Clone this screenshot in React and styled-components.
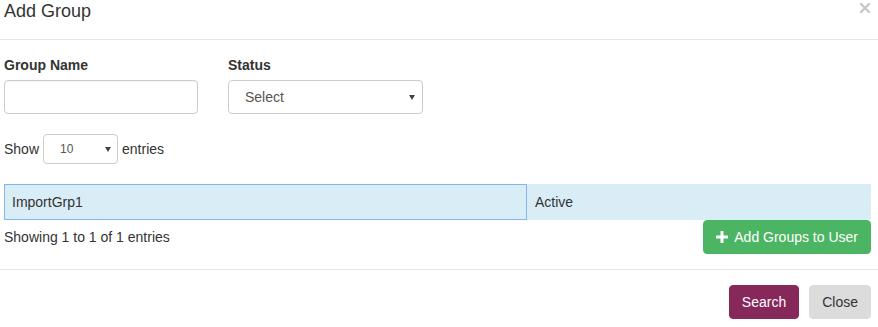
import React from "react";
import styled, { createGlobalStyle } from "styled-components";

const Global = createGlobalStyle`
  html, body { margin: 0; padding: 0; background: #fff; }
  body {
    font-family: "Liberation Sans", Arial, sans-serif;
    font-size: 14px;
    line-height: 20px;
    color: #333;
  }
  * { box-sizing: border-box; }
`;

const Modal = styled.div`
  width: 878px;
  background: #fff;
`;

const Header = styled.div`
  display: flex;
  justify-content: space-between;
  align-items: flex-start;
  height: 40px;
  padding: 1px 8px 0 4px;
  border-bottom: 1px solid #e5e5e5;
`;

const Title = styled.h4`
  margin: 0;
  font-size: 18px;
  line-height: 20px;
  font-weight: 400;
  color: #333;
`;

const CloseButton = styled.button`
  display: flex;
  border: 0;
  padding: 0;
  margin-top: 2px;
  background: transparent;
  cursor: pointer;
`;

const Body = styled.div`
  padding: 15px 7px 15px 4px;
`;

const FormRow = styled.div`
  display: grid;
  grid-template-columns: 194px 195px;
  column-gap: 30px;
  margin-bottom: 20px;
`;

const Field = styled.div`
  display: flex;
  flex-direction: column;
`;

const Label = styled.label`
  font-weight: 700;
  line-height: 20px;
  margin-bottom: 5px;
`;

const TextInput = styled.input`
  height: 34px;
  width: 100%;
  border: 1px solid #ccc;
  border-radius: 4px;
  padding: 6px 12px;
  font: inherit;
  color: #555;
  outline: none;
  box-shadow: inset 0 1px 1px rgba(0, 0, 0, 0.04);
`;

const SelectBox = styled.div`
  position: relative;
  display: flex;
  align-items: center;
  height: ${(p) => (p.$small ? "30px" : "34px")};
  width: ${(p) => (p.$small ? "75px" : "100%")};
  border: 1px solid #ccc;
  border-radius: 4px;
  padding-left: 16px;
  font-size: ${(p) => (p.$small ? "12px" : "14px")};
  color: #555;
  background: #fff;
`;

const Caret = styled.span`
  position: absolute;
  right: ${(p) => (p.$small ? "6px" : "7px")};
  top: 50%;
  margin-top: -2px;
  width: 0;
  height: 0;
  border-left: 3.5px solid transparent;
  border-right: 3.5px solid transparent;
  border-top: 5px solid #444;
`;

const ShowRow = styled.div`
  display: flex;
  align-items: center;
  gap: 4px;
  margin-bottom: 20px;
`;

const Table = styled.div`
  display: grid;
  grid-template-columns: 523px 1fr;
  background: #d9edf7;
`;

const Cell = styled.div`
  height: 36px;
  padding: 7px 7px;
  line-height: 20px;
  border: 1px solid ${(p) => (p.$focus ? "#86b5ec" : "transparent")};
`;

const InfoRow = styled.div`
  display: flex;
  justify-content: space-between;
  align-items: center;
`;

const Button = styled.button`
  display: inline-flex;
  align-items: center;
  gap: 6px;
  height: 34px;
  padding: 6px 12px;
  border: 1px solid ${(p) => p.$bg};
  border-radius: 4px;
  font-family: inherit;
  font-size: 14px;
  line-height: 20px;
  cursor: pointer;
  background: ${(p) => p.$bg};
  color: ${(p) => p.$fg};
`;

const Footer = styled.div`
  display: flex;
  justify-content: flex-end;
  gap: 10px;
  padding: 15px 7px 15px 4px;
  border-top: 1px solid #e5e5e5;
`;

const PlusIcon = () => (
  <svg width="12" height="12" viewBox="0 0 12 12" aria-hidden="true">
    <path d="M4.5 0h3v4.5H12v3H7.5V12h-3V7.5H0v-3h4.5z" fill="#fff" />
  </svg>
);

const CrossIcon = () => (
  <svg width="10" height="10" viewBox="0 0 10 10" aria-hidden="true">
    <path d="M1 1L9 9M9 1L1 9" stroke="#c6c6c6" strokeWidth="2.2" strokeLinecap="square" />
  </svg>
);

export default function App() {
  return (
    <>
      <Global />
      <Modal>
        <Header>
          <Title>Add Group</Title>
          <CloseButton aria-label="Close">
            <CrossIcon />
          </CloseButton>
        </Header>
        <Body>
          <FormRow>
            <Field>
              <Label>Group Name</Label>
              <TextInput type="text" />
            </Field>
            <Field>
              <Label>Status</Label>
              <SelectBox>
                Select
                <Caret />
              </SelectBox>
            </Field>
          </FormRow>
          <ShowRow>
            <span>Show</span>
            <SelectBox $small>
              10
              <Caret $small />
            </SelectBox>
            <span>entries</span>
          </ShowRow>
          <Table>
            <Cell $focus>ImportGrp1</Cell>
            <Cell>Active</Cell>
          </Table>
          <InfoRow>
            <span>Showing 1 to 1 of 1 entries</span>
            <Button $bg="#4cb564" $fg="#fff">
              <PlusIcon />
              Add Groups to User
            </Button>
          </InfoRow>
        </Body>
        <Footer>
          <Button $bg="#86285a" $fg="#fff">Search</Button>
          <Button $bg="#dcdcdc" $fg="#333">Close</Button>
        </Footer>
      </Modal>
    </>
  );
}
